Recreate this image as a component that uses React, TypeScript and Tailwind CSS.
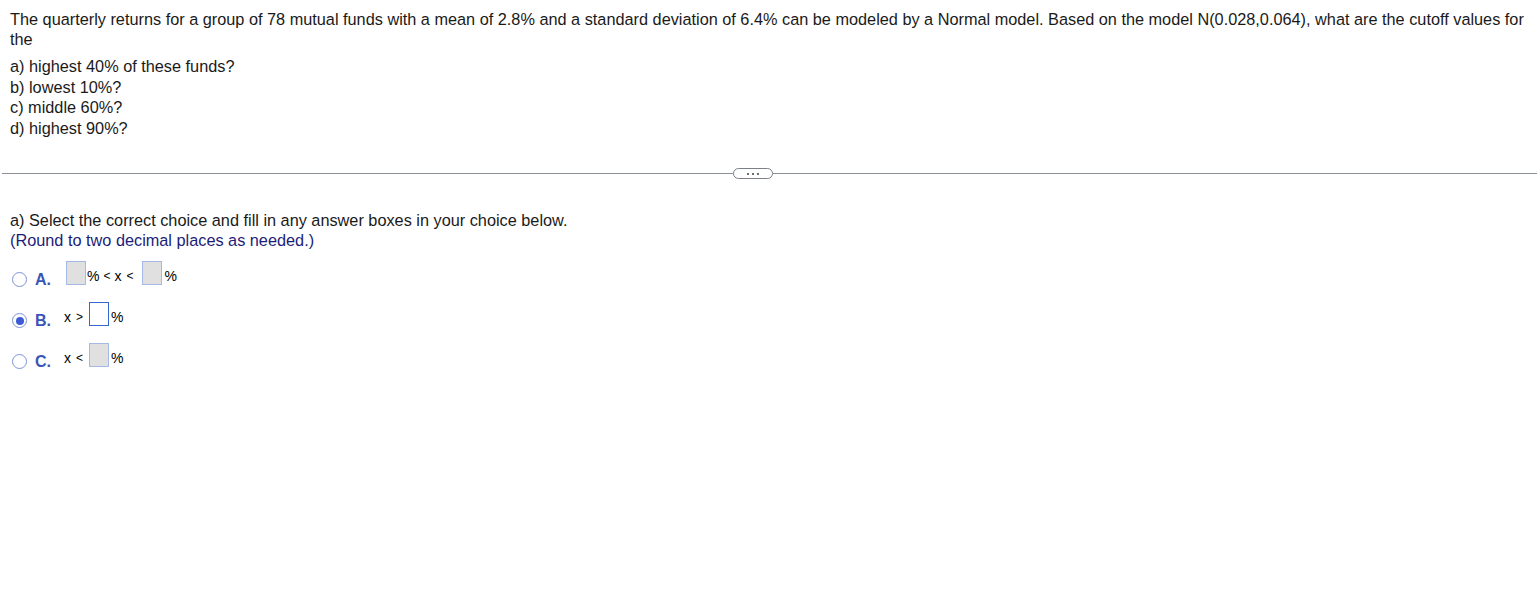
import React from "react";

const Radio = ({ checked }: { checked?: boolean }) => (
  <span className="flex h-[15px] w-[15px] items-center justify-center rounded-full border-[1.5px] border-[#7f92d8] bg-white">
    {checked && <span className="h-[8px] w-[8px] rounded-full bg-[#3b5bd6]" />}
  </span>
);

const Box = ({ active }: { active?: boolean }) => (
  <span
    className={
      active
        ? "inline-block h-[24px] w-[20px] border border-[#3567d1] bg-white"
        : "inline-block h-[24px] w-[20px] border border-[#a4b9e6] bg-[#e0e0e0]"
    }
  />
);

const Option = ({
  letter,
  checked,
  children,
}: {
  letter: string;
  checked?: boolean;
  children: React.ReactNode;
}) => (
  <div className="flex h-[41px] items-center">
    <div className="flex w-[54px] items-center pt-[8px]">
      <span className="ml-[12px]">
        <Radio checked={checked} />
      </span>
      <span className="ml-[8px] text-[16px] font-bold leading-none text-[#3a55b8]">{letter}.</span>
    </div>
    <div className="flex items-center text-[14px] text-black">{children}</div>
  </div>
);

export default function App() {
  return (
    <div className="min-h-[602px] bg-white font-['Liberation_Sans',Arial,sans-serif] text-[16.3px] leading-[20px] text-[#1a1a1a]">
      <div className="px-[10px] pt-[9px]">
        <p>
          The quarterly returns for a group of 78 mutual funds with a mean of 2.8% and a standard deviation of 6.4% can be
          modeled by a Normal model. Based on the model N(0.028,0.064), what are the cutoff values for the
        </p>
        <div className="mt-[7px] leading-[20.5px]">
          <div>a) highest 40% of these funds?</div>
          <div>b) lowest 10%?</div>
          <div>c) middle 60%?</div>
          <div>d) highest 90%?</div>
        </div>
      </div>

      <div className="mt-[30px] flex items-center px-[2px]">
        <div className="h-px w-[731px] bg-[#8b9098]" />
        <div className="flex h-[11px] w-[40px] items-center justify-center gap-[3px] rounded-full border border-[#7b8089] bg-white">
          <span className="h-[2px] w-[2px] bg-[#6b7079]" />
          <span className="h-[2px] w-[2px] bg-[#6b7079]" />
          <span className="h-[2px] w-[2px] bg-[#6b7079]" />
        </div>
        <div className="h-px flex-1 bg-[#8b9098]" />
      </div>

      <div className="px-[10px] pt-[31px]">
        <div>a) Select the correct choice and fill in any answer boxes in your choice below.</div>
        <div className="text-[#1c1c78]">(Round to two decimal places as needed.)</div>
      </div>

      <div className="mt-[5px]">
        <Option letter="A">
          <span className="ml-[12px]">
            <Box />
          </span>
          <span className="ml-[1px]">%</span>
          <span className="ml-[4px] text-[12px]">&lt;</span>
          <span className="ml-[4px]">x</span>
          <span className="ml-[5px] text-[12px]">&lt;</span>
          <span className="ml-[9px]">
            <Box />
          </span>
          <span className="ml-[2px]">%</span>
        </Option>
        <Option letter="B" checked>
          <span className="ml-[10px]">x</span>
          <span className="ml-[5px] text-[12px]">&gt;</span>
          <span className="ml-[6px]">
            <Box active />
          </span>
          <span className="ml-[2px]">%</span>
        </Option>
        <Option letter="C">
          <span className="ml-[10px]">x</span>
          <span className="ml-[5px] text-[12px]">&lt;</span>
          <span className="ml-[6px]">
            <Box />
          </span>
          <span className="ml-[2px]">%</span>
        </Option>
      </div>
    </div>
  );
}
